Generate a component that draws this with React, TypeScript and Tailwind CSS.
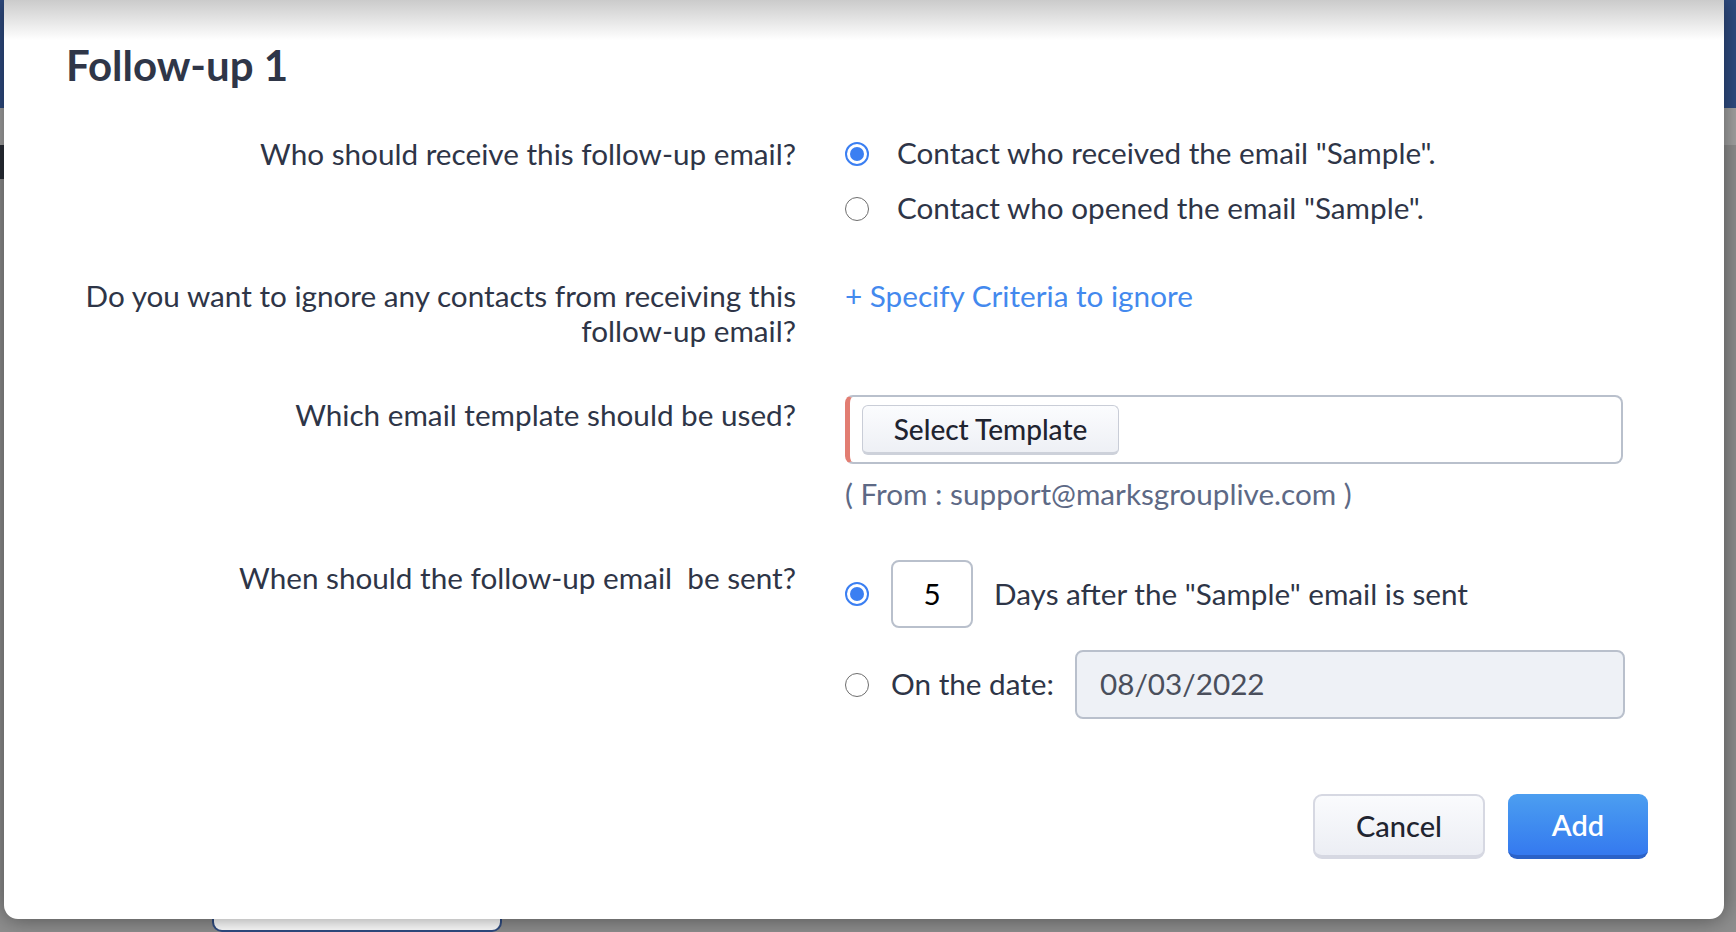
import React from 'react'

function Radio({ checked }: { checked?: boolean }) {
  if (checked) {
    return (
      <span className="flex h-[24px] w-[24px] shrink-0 items-center justify-center rounded-full border-[2px] border-[#3b7ff2] bg-white">
        <span className="h-[14px] w-[14px] rounded-full bg-[#3b7ff2]" />
      </span>
    )
  }
  return <span className="h-[24px] w-[24px] shrink-0 rounded-full border-[1.5px] border-[#6e6e6e] bg-white" />
}

export default function App() {
  return (
    <div className="relative h-[932px] w-[1736px] overflow-hidden font-['Lato',sans-serif]">
      {/* page behind the overlay */}
      <div className="flex h-full flex-col bg-[#8e8e8e]">
        <div className="h-[108px] bg-[#2f4c82]" />
        <div className="h-[37px] bg-[#a2a2a2]" />
        <div className="h-[34px] w-[120px] bg-[#2a2e37]" />
        <div className="flex-1" />
        <div className="ml-[212px] h-[30px] w-[290px] rounded-b-[10px] border-2 border-t-0 border-[#2f4c82] bg-white" />
      </div>

      {/* modal */}
      <div className="absolute left-[4px] top-0 flex h-[919px] w-[1720px] flex-col overflow-hidden rounded-b-[14px] bg-white text-[#2e3547] shadow-[0_0_22px_rgba(0,0,0,0.45)]">
        <div className="h-[40px] shrink-0 bg-gradient-to-b from-[#cbcbcb] to-white" />
        <h1 className="pl-[62px] text-[42px] font-bold leading-[50px] text-[#2f3648]">Follow-up 1</h1>

        {/* row 1 */}
        <div className="mt-[46px] flex">
          <div className="w-[792px] shrink-0 pl-[62px] text-right text-[29.7px] leading-[35px]">
            Who should receive this follow-up email?
          </div>
          <div className="ml-[49px] flex flex-col gap-[20px]">
            <label className="flex h-[35px] items-center gap-[28px] text-[29.7px]">
              <Radio checked />
              <span>Contact who received the email "Sample".</span>
            </label>
            <label className="flex h-[35px] items-center gap-[28px] text-[29.7px]">
              <Radio />
              <span>Contact who opened the email "Sample".</span>
            </label>
          </div>
        </div>

        {/* row 2 */}
        <div className="mt-[52px] flex">
          <div className="w-[792px] shrink-0 pl-[62px] text-right text-[29.7px] leading-[35px]">
            Do you want to ignore any contacts from receiving this follow-up email?
          </div>
          <div className="ml-[49px]">
            <span className="text-[29.7px] leading-[35px] text-[#4389ee]">+ Specify Criteria to ignore</span>
          </div>
        </div>

        {/* row 3 */}
        <div className="mt-[47px] flex">
          <div className="w-[792px] shrink-0 pl-[62px] pt-[2px] text-right text-[29.7px] leading-[35px]">
            Which email template should be used?
          </div>
          <div className="ml-[49px] flex flex-col">
            <div className="flex h-[69px] w-[778px] items-center rounded-[8px] border-2 border-l-[5px] border-[#b9c0cc] border-l-[#e27d72] pl-[12px]">
              <button className="flex h-[50px] w-[257px] items-center justify-center rounded-[6px] border border-b-[3px] border-[#c9cdd7] border-b-[#cdd1da] bg-gradient-to-b from-[#fbfcfe] to-[#eef0f5] text-[28px] font-medium text-[#1f2430]">
                Select Template
              </button>
            </div>
            <div className="mt-[12px] text-[29.7px] leading-[35px] text-[#5d6985]">
              ( From : support@marksgrouplive.com )
            </div>
          </div>
        </div>

        {/* row 4 */}
        <div className="mt-[49px] flex">
          <div className="w-[792px] shrink-0 pl-[62px] text-right text-[29.7px] leading-[35px]">
            When should the follow-up email{'\u00a0'} be sent?
          </div>
          <div className="ml-[49px] flex flex-col">
            <div className="flex h-[68px] items-center">
              <Radio checked />
              <div className="ml-[22px] flex h-[68px] w-[82px] items-center justify-center rounded-[8px] border-2 border-[#b9c0cc] text-[29.7px] text-black">
                5
              </div>
              <span className="ml-[21px] text-[29.7px]">Days after the "Sample" email is sent</span>
            </div>
            <div className="mt-[22px] flex h-[69px] items-center">
              <Radio />
              <span className="ml-[22px] text-[29.7px]">On the date:</span>
              <div className="ml-[21px] flex h-[69px] w-[550px] items-center rounded-[8px] border-2 border-[#b9c0cc] bg-[#eef1f6] pl-[23px] text-[29.7px] text-[#4a4f5c]">
                08/03/2022
              </div>
            </div>
          </div>
        </div>

        {/* actions */}
        <div className="mt-[75px] flex justify-end gap-[23px] pr-[76px]">
          <button className="flex h-[65px] w-[172px] items-center justify-center rounded-[9px] border-2 border-b-[4px] border-[#d6d8e2] bg-gradient-to-b from-[#fafbfd] to-[#eceef4] text-[29px] font-medium text-[#1f2430]">
            Cancel
          </button>
          <button className="flex h-[65px] w-[140px] items-center justify-center rounded-[9px] border-b-[4px] border-[#2b62c8] bg-gradient-to-b from-[#4c9ef0] to-[#3579ef] text-[29px] font-semibold text-white">
            Add
          </button>
        </div>
      </div>
    </div>
  )
}
